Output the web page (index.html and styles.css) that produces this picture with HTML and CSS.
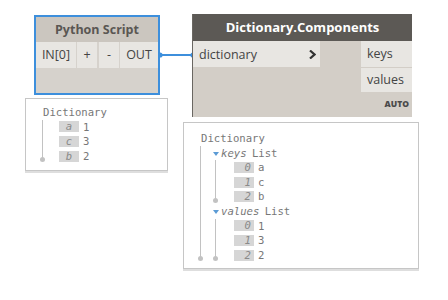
FILE: index.html
```html
<!DOCTYPE html>
<html lang="en">
<head>
    <meta charset="UTF-8">
    <title>Dictionary.Components</title>
    <link rel="stylesheet" href="styles.css">
</head>
<body>
    <div class="canvas">
        <div class="node python">
            <div class="node-title">Python Script</div>
            <div class="ports">
                <span class="port p-in">IN[0]</span>
                <span class="port p-add">+</span>
                <span class="port p-rem">-</span>
                <span class="port p-out">OUT</span>
            </div>
        </div>

        <svg class="wire" width="40" height="10" viewBox="0 0 40 10">
            <circle cx="2" cy="5" r="2.6" fill="#3d8fdc"/>
            <line x1="2" y1="5" x2="35" y2="5" stroke="#3d8fdc" stroke-width="2"/>
            <circle cx="35" cy="5" r="2.6" fill="#3d8fdc"/>
        </svg>

        <div class="node dict">
            <div class="node-title dark">Dictionary.Components</div>
            <div class="dict-body">
                <div class="inputs">
                    <span class="port d-in">dictionary
                        <svg class="chev" width="7" height="9" viewBox="0 0 7 9"><path d="M1 0.5 L5.5 4.5 L1 8.5" fill="none" stroke="#333" stroke-width="2.2"/></svg>
                    </span>
                </div>
                <div class="outputs">
                    <span class="port d-out">keys</span>
                    <span class="port d-out">values</span>
                </div>
            </div>
            <div class="auto">AUTO</div>
        </div>

        <div class="watch watch-py">
            <div class="tree-label">Dictionary</div>
            <div class="branch b-py">
                <div class="row"><span class="key">a</span>1</div>
                <div class="row"><span class="key">c</span>3</div>
                <div class="row"><span class="key">b</span>2</div>
            </div>
        </div>

        <div class="watch watch-dict">
            <div class="tree-label">Dictionary</div>
            <div class="branch b-outer">
                <div class="group-label"><span class="caret"></span><i>keys</i> List</div>
                <div class="branch b-inner">
                    <div class="row"><span class="idx">0</span>a</div>
                    <div class="row"><span class="idx">1</span>c</div>
                    <div class="row"><span class="idx">2</span>b</div>
                </div>
                <div class="group-label"><span class="caret"></span><i>values</i> List</div>
                <div class="branch b-inner">
                    <div class="row"><span class="idx">0</span>1</div>
                    <div class="row"><span class="idx">1</span>3</div>
                    <div class="row"><span class="idx">2</span>2</div>
                </div>
            </div>
        </div>
    </div>
</body>
</html>
```

FILE: styles.css
```css
body {
    margin: 0;
    background: #ffffff;
    font-family: 'Open Sans', sans-serif;
}
.canvas {
    position: relative;
    width: 448px;
    height: 300px;
    overflow: hidden;
}

/* nodes */
.node {
    position: absolute;
    box-sizing: border-box;
}
.node-title {
    font-weight: bold;
    text-align: center;
    white-space: nowrap;
}
.port {
    box-sizing: border-box;
    background: #e8e6e2;
    color: #444;
    font-size: 12.5px;
    height: 26px;
    line-height: 25px;
    white-space: nowrap;
}
.python {
    left: 34px;
    top: 15px;
    width: 126px;
    height: 80px;
    border: 2px solid #3d8fdc;
    background: #d6d2cc;
}
.python .node-title {
    height: 25px;
    line-height: 25px;
    background: #cbc6bf;
    color: #5a5753;
    font-size: 12.5px;
}
.ports {
    display: flex;
}
.ports .port {
    text-align: center;
}
.p-in { width: 40px; margin-right: 1px; }
.p-add { width: 20px; margin-right: 2px; }
.p-rem { width: 20px; margin-right: 1px; }
.p-out { flex: 1; }

.wire {
    position: absolute;
    left: 158px;
    top: 50px;
}

.dict {
    left: 192px;
    top: 14px;
    width: 220px;
    height: 103px;
    background: #d3cec7;
    border-left: 1px solid #6a6762;
}
.node-title.dark {
    height: 27px;
    line-height: 27px;
    background: #5c5955;
    color: #ffffff;
    font-size: 13px;
}
.dict-body {
    display: flex;
    justify-content: space-between;
}
.d-in {
    display: flex;
    align-items: center;
    justify-content: space-between;
    width: 127px;
    padding: 0 4px 0 6px;
}
.outputs {
    display: flex;
    flex-direction: column;
    gap: 1px;
}
.d-out {
    width: 51px;
    padding-left: 6px;
}
.d-out + .d-out {
    height: 24px;
    line-height: 24px;
}
.auto {
    text-align: right;
    padding: 6px 3px 0 0;
    font-size: 8.5px;
    font-weight: 800;
    color: #4a4a4a;
}

/* watch previews */
.watch {
    position: absolute;
    box-sizing: border-box;
    background: #fff;
    border: 1px solid #c6c6c6;
    box-shadow: 0 2px 0 #dedede;
    padding-left: 16px;
    font-family: 'DejaVu Sans Mono', monospace;
    font-size: 10.6px;
    color: #777;
    line-height: 14.6px;
}
.watch-py {
    left: 25px;
    top: 98px;
    width: 143px;
    height: 73px;
    padding-top: 6px;
}
.watch-dict {
    left: 183px;
    top: 122px;
    width: 236px;
    height: 147px;
    padding-top: 8px;
}
.tree-label {
    padding-left: 1px;
}
.branch {
    position: relative;
}
.branch::before {
    content: "";
    position: absolute;
    left: 0;
    top: 0;
    bottom: 4px;
    width: 1px;
    background: #c2c2c2;
}
.branch::after {
    content: "";
    position: absolute;
    left: -2px;
    bottom: 1px;
    width: 5px;
    height: 5px;
    border-radius: 50%;
    background: #c2c2c2;
}
.b-py {
    padding-left: 17px;
}
.b-outer {
    padding-left: 13px;
}
.b-inner {
    margin-left: 2px;
    padding-left: 19px;
}
.group-label i {
    margin-right: -1px;
}
.caret {
    display: inline-block;
    width: 0;
    height: 0;
    border-left: 3px solid transparent;
    border-right: 3px solid transparent;
    border-top: 4px solid #5b9bd5;
    margin-right: 2px;
    vertical-align: 1px;
}
.row {
    display: flex;
    align-items: center;
}
.key,
.idx {
    display: inline-block;
    box-sizing: border-box;
    width: 20px;
    height: 11px;
    line-height: 11px;
    background: #d6d6d6;
    color: #8a8a8a;
    font-style: italic;
    margin-right: 4px;
}
.key {
    text-align: center;
}
.idx {
    text-align: right;
    padding-right: 3px;
}
```
